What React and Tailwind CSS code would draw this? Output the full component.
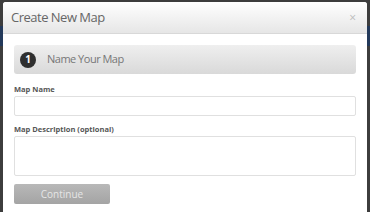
export default function App() {
  return (
    <div className="relative w-[370px] h-[212px] overflow-hidden bg-[#3d3d3d]" style={{ fontFamily: '"Open Sans", sans-serif' }}>
      <div className="absolute left-0 right-0 top-[26px] h-[20px] bg-[#23395a]" />
      <div className="absolute left-[3px] right-[3px] top-[2px] bottom-[-10px] bg-white rounded-t-[3px] flex flex-col">
        <div className="h-[32px] flex items-center justify-between px-[8px] border-b border-[#d8d8d8] bg-gradient-to-b from-white to-[#e6e6e6] rounded-t-[3px]">
          <span className="text-[13px] tracking-[-0.5px] text-[#666]">Create New Map</span>
          <span className="text-[12px] text-[#bbb] mr-[3px]">×</span>
        </div>
        <div className="px-[11px] pt-[11px] flex flex-col">
          <div className="h-[29px] rounded-[3px] bg-gradient-to-b from-[#efefef] to-[#d9d9d9] flex items-center px-[6px] gap-[11px]">
            <div className="w-[16px] h-[16px] rounded-full bg-[#2f2f2f] text-white text-[10px] font-bold flex items-center justify-center">1</div>
            <span className="text-[11px] tracking-[-0.5px] text-[#777]">Name Your Map</span>
          </div>
          <label className="mt-[10px] text-[7.5px] leading-[10px] font-bold text-[#555]">Map Name</label>
          <div className="mt-[2px] h-[20px] border border-[#e0e0e0] rounded-[2px]" />
          <label className="mt-[8px] text-[7.5px] leading-[10px] font-bold text-[#555]">Map Description (optional)</label>
          <div className="mt-[2px] h-[40px] border border-[#e0e0e0] rounded-[2px]" />
          <button className="mt-[8px] w-[96px] h-[20px] rounded-[2px] bg-gradient-to-b from-[#b8b8b8] to-[#a4a4a4] text-[10px] text-[#e6e6e6]">Continue</button>
        </div>
      </div>
    </div>
  );
}
